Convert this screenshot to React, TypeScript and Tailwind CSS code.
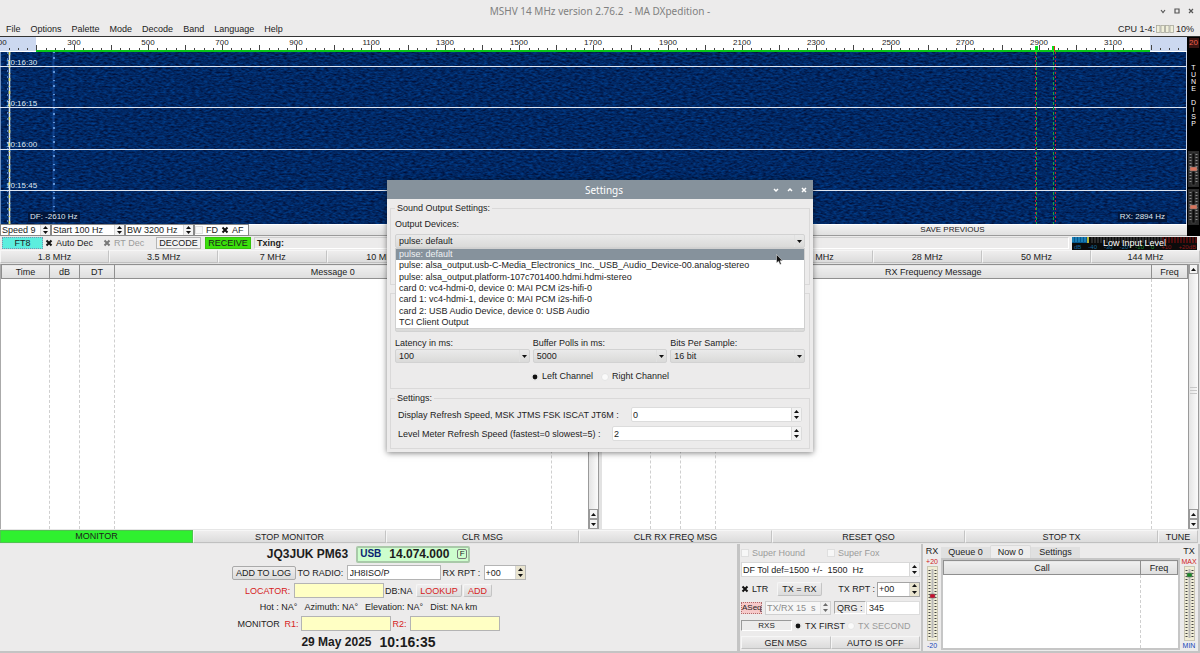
import type { ReactNode } from "react";
import clsx from "clsx";

const BANDS = ["1.8", "3.5", "7", "10", "14", "18", "21", "24", "28", "50", "144"];

const DEVICES = [
  "pulse: default",
  "pulse: alsa_output.usb-C-Media_Electronics_Inc._USB_Audio_Device-00.analog-stereo",
  "pulse: alsa_output.platform-107c701400.hdmi.hdmi-stereo",
  "card 0: vc4-hdmi-0, device 0: MAI PCM i2s-hifi-0",
  "card 1: vc4-hdmi-1, device 0: MAI PCM i2s-hifi-0",
  "card 2: USB Audio Device, device 0: USB Audio",
  "TCI Client Output",
];

// ruler geometry: the scale starts at 102 Hz and runs over 1187 units
const RULER_W = 1187;
const freqToX = (f: number) => Math.round((f - 102) * 0.3714);

const TIMES = [
  { label: "10:16:30", y: 14 },
  { label: "10:16:15", y: 55 },
  { label: "10:16:00", y: 97 },
  { label: "10:15:45", y: 138 },
];

function Arrow({ up = false }: { up?: boolean }) {
  return (
    <svg width="5" height="3" viewBox="0 0 5 3" className="shrink-0">
      <path d={up ? "M0 3 L2.5 0 L5 3Z" : "M0 0 L2.5 3 L5 0Z"} fill="#111" />
    </svg>
  );
}

function SpinButtons({ tone = "plain" }: { tone?: "plain" | "cream" | "dim" }) {
  return (
    <span
      className={clsx(
        "flex w-[10px] shrink-0 flex-col self-stretch border-l border-[#d8d8d8]",
        tone === "cream" && "bg-[#e9e4cf]",
        tone === "plain" && "bg-[#f3f3f3]",
        tone === "dim" && "bg-[#ededed] opacity-60",
      )}
    >
      <button type="button" aria-label="Increase" className="flex flex-1 items-center justify-center">
        <Arrow up />
      </button>
      <button type="button" aria-label="Decrease" className="flex flex-1 items-center justify-center">
        <Arrow />
      </button>
    </span>
  );
}

function Spin({
  label,
  value,
  className,
  tone = "plain",
}: {
  label: string;
  value: string;
  className?: string;
  tone?: "plain" | "cream" | "dim";
}) {
  return (
    <span className={clsx("flex items-stretch overflow-hidden border", className)}>
      <input aria-label={label} defaultValue={value} className="w-0 min-w-0 flex-1 bg-transparent pl-px outline-none" />
      <SpinButtons tone={tone} />
    </span>
  );
}

function PanelButton({ children, className }: { children?: ReactNode; className?: string }) {
  return (
    <button
      type="button"
      className={clsx(
        "flex items-center justify-center whitespace-nowrap border border-t-[#f6f6f6] border-r-[#c4c4c4] border-b-[#c0c0c0] border-l-[#f6f6f6] bg-linear-to-b from-[#efeeee] to-[#dcdcdc]",
        className,
      )}
    >
      {children}
    </button>
  );
}

function Check({ label, checked = false, dim = false }: { label: string; checked?: boolean; dim?: boolean }) {
  return (
    <label className={clsx("flex items-center whitespace-nowrap", dim && "text-[#9b9b9b]")}>
      <input type="checkbox" defaultChecked={checked} disabled={dim} className="peer sr-only" />
      <svg width="8" height="8" viewBox="0 0 8 8" className="mr-[3px] shrink-0">
        {checked ? (
          <path d="M1.5 1.5 L6.5 6.5 M6.5 1.5 L1.5 6.5" stroke={dim ? "#777" : "#111"} strokeWidth="2" />
        ) : (
          <rect x="0.5" y="0.5" width="7" height="7" fill="#f7f7f7" stroke="#dfdfdf" />
        )}
      </svg>
      {label}
    </label>
  );
}

function Radio({
  label,
  name,
  checked = false,
  dim = false,
}: {
  label: string;
  name: string;
  checked?: boolean;
  dim?: boolean;
}) {
  return (
    <label className={clsx("flex items-center whitespace-nowrap", dim && "text-[#9b9b9b]")}>
      <input type="radio" name={name} defaultChecked={checked} disabled={dim} className="peer sr-only" />
      <svg width="8" height="8" viewBox="0 0 8 8" className="mr-[3px] shrink-0">
        <circle cx="4" cy="4" r="3.5" fill={checked ? "#f0f0f0" : "#fafafa"} stroke="#e4e4e4" />
        {checked && <circle cx="4" cy="4" r="2.4" fill="#111" />}
      </svg>
      {label}
    </label>
  );
}

function Select({ id, options, className }: { id: string; options: string[]; className?: string }) {
  return (
    <span
      className={clsx(
        "relative flex h-[14px] items-center rounded-xs border border-[#d2d2d2] bg-linear-to-b from-[#eaeaea] to-[#dadad9]",
        className,
      )}
    >
      <select id={id} className="h-full w-full appearance-none bg-transparent pl-[3px] outline-none">
        {options.map((o) => (
          <option key={o}>{o}</option>
        ))}
      </select>
      <span className="pointer-events-none absolute inset-y-0 right-0 flex w-[10px] items-center justify-center border-l border-[#e0e0e0]">
        <Arrow />
      </span>
    </span>
  );
}

function TitleBar() {
  return (
    <header className="flex h-[22px] items-center bg-[#ecebeb] pr-0.5 pl-2 font-['Noto_Sans',sans-serif] text-[10px] text-[#808080]">
      <span className="w-8" />
      <h1 className="flex-1 whitespace-pre text-center">MSHV 14 MHz version 2.76.2  - MA DXpedition -</h1>
      <span className="flex w-[38px] items-center gap-2">
        {["M1 2 L3 4.5 L5 2", "M1 1 H5 V5 H1Z", "M1 1 L5 5 M5 1 L1 5"].map((d, i) => (
          <button key={d} type="button" aria-label={["Minimize", "Maximize", "Close"][i]}>
            <svg width="6" height="6" viewBox="0 0 6 6" fill="none" stroke="#555" strokeWidth="1.2">
              <path d={d} />
            </svg>
          </button>
        ))}
      </span>
    </header>
  );
}

function MenuBar() {
  return (
    <nav className="flex h-[14px] items-center bg-[#ecebeb] pr-1.5 pl-[6px]">
      <span className="flex gap-[10px]">
        {["File", "Options", "Palette", "Mode", "Decode", "Band", "Language", "Help"].map((m) => (
          <button key={m} type="button">
            {m}
          </button>
        ))}
      </span>
      <span className="ml-auto flex items-center">
        CPU 1-4:
        <svg width="19" height="8" viewBox="0 0 19 8" className="mx-px">
          {[0, 1, 2, 3].map((i) => (
            <rect key={i} x={i * 4.5 + 0.5} y="0.5" width="3.5" height="7" fill="#f0efda" stroke="#a9a99c" strokeWidth="0.8" />
          ))}
        </svg>
        10%
      </span>
    </nav>
  );
}

function Ruler() {
  const ticks = [];
  for (let f = 125; f < 3290; f += 25) ticks.push(f);
  const labels = [];
  for (let f = 100; f < 3200; f += 200) labels.push(f);
  return (
    <div className="relative h-[15px] overflow-hidden bg-white text-[8px] leading-[11px]">
      <svg className="h-full w-full" viewBox="0 0 1187 15" preserveAspectRatio="none" shapeRendering="crispEdges">
        <rect width="36" height="14" fill="#ccd8f0" />
        <rect x="1150" width="37" height="14" fill="#ccd8f0" />
        {ticks.map((f) => (
          <rect
            key={f}
            x={freqToX(f)}
            y={f % 100 === 0 ? 8 : 11}
            width="1"
            height={f % 100 === 0 ? 5 : 2}
            fill="#444"
          />
        ))}
        <rect x="36" y="13" width="1114" height="2" fill="#08c418" />
        <rect x="1035" y="9" width="3" height="6" fill="#06e01c" />
        <rect x="1052" y="9" width="2" height="6" fill="#06e01c" />
        <rect x="1054" y="9" width="1" height="6" fill="#e02020" />
      </svg>
      {labels.map((f) => (
        <span
          key={f}
          className="absolute top-0 w-8 -translate-x-1/2 text-center"
          style={{ left: `${((f === 100 ? 0 : freqToX(f)) / RULER_W) * 100}%` }}
        >
          {f}
        </span>
      ))}
    </div>
  );
}

function Waterfall() {
  return (
    <div className="relative h-[172px] overflow-hidden bg-[#01275f] text-[8px] leading-[10px] text-[#dfe6f2]">
      <svg className="h-full w-full" viewBox="0 0 1187 172" preserveAspectRatio="none">
        <defs>
          <filter id="noise" x="0" y="0" width="100%" height="100%" colorInterpolationFilters="sRGB">
            <feTurbulence type="fractalNoise" baseFrequency="0.24 0.55" numOctaves="2" seed="7" />
            <feColorMatrix values="0 0 0 0 0.002  0.28 0 0 0 0.015  0.5 0 0 0 0.14  0 0 0 0 1" />
          </filter>
        </defs>
        <rect width="1187" height="172" filter="url(#noise)" />
        <rect width="1" height="172" fill="#6f8fc0" />
        <path d="M9.5 0V172" stroke="#dfe9f0" strokeWidth="1.5" />
        <path d="M9.5 0V172" stroke="#e6e66a" strokeWidth="1.5" strokeDasharray="3 5 1 4" />
        <path d="M7.5 0V172" stroke="#4f7ecb" strokeDasharray="2 4" />
        <path d="M53.5 0V172" stroke="#1f55a8" strokeWidth="2" opacity="0.6" />
        <path d="M54 0V172" stroke="#5f93d6" strokeWidth="2" strokeDasharray="1 4 2 7" />
        {TIMES.map((t) => (
          <rect key={t.label} y={t.y} width="1186" height="1" fill="#dfe6f2" />
        ))}
        <path d="M1035.5 0V172 M1055.5 0V172" stroke="#c01f35" strokeDasharray="2 2" />
        <path d="M1036.5 0V172" stroke="#18a83a" strokeDasharray="3 2" />
        <path d="M1053.5 0V172" stroke="#18a83a" strokeDasharray="3 2" />
        <rect x="1186" width="1" height="172" fill="#c9d4e8" />
      </svg>
      <div className="absolute top-[6px] left-[6px] flex flex-col gap-[31px]">
        {TIMES.map((t) => (
          <span key={t.label}>{t.label}</span>
        ))}
      </div>
      <span className="absolute bottom-0.5 left-[28px] bg-[#02163b] px-0.5">DF: -2610 Hz</span>
      <span className="absolute right-[20px] bottom-0.5 bg-[#02163b] px-0.5">RX: 2894 Hz</span>
    </div>
  );
}

function DarkFader({ label, knob, height }: { label: string; knob: number; height: number }) {
  return (
    <div className="relative bg-[#2b2b2b]">
      <svg width="11" height={height} viewBox={`0 0 11 ${height}`} className="block">
        <path d={`M2.5 3V${height - 3} M8.5 3V${height - 3}`} stroke="#8a8a8a" strokeWidth="2" strokeDasharray="1 2" />
        <rect x="4" y="2" width="3" height={height - 4} fill="#0a0a0a" stroke="#555" strokeWidth="0.5" />
        <rect x="2" y={knob} width="7" height="4" fill="#d8745c" stroke="#777" strokeWidth="0.6" />
      </svg>
      <input type="range" aria-label={label} className="absolute inset-0 h-full w-full opacity-0" />
    </div>
  );
}

function TuneStrip() {
  return (
    <aside className="flex w-[13px] shrink-0 flex-col items-center bg-black text-white">
      <span className="mt-px w-[10px] bg-[#3a1512] text-center text-[8px] leading-[10px] text-[#f0604f]">20</span>
      <span className="mt-4 flex flex-col items-center text-[7px] leading-[7px]">
        {[..."TUNE"].map((c) => (
          <span key={c}>{c}</span>
        ))}
        <span className="mt-[7px] flex flex-col items-center">
          {[..."DISP"].map((c) => (
            <span key={c}>{c}</span>
          ))}
        </span>
      </span>
      <div className="mt-auto mb-[11px] flex flex-col gap-0.5">
        <DarkFader label="Tune gain" knob={16} height={36} />
        <DarkFader label="Display gain" knob={16} height={36} />
      </div>
    </aside>
  );
}

function WaterfallControls() {
  return (
    <div className="flex h-[12px] items-stretch bg-[#6e6e6e]">
      <Spin label="Speed" value="Speed 9" className="w-[51px] border-[#888] bg-white" />
      <Spin label="Start" value="Start 100 Hz" className="w-[74px] border-[#888] bg-white" />
      <Spin label="Bandwidth" value="BW 3200 Hz" className="w-[69px] border-[#888] bg-white" />
      <div className="flex w-[55px] items-center gap-[3px] border border-[#888] bg-white">
        <Check label="FD" />
        <Check label="AF" checked />
      </div>
      <button
        type="button"
        aria-label="Save current"
        className="flex-1 border-y border-t-white border-b-[#9a9a9a] bg-linear-to-b from-[#f2f2f2] to-[#e0e0e0]"
      />
      <button
        type="button"
        className="flex-1 border-y border-t-white border-b-[#9a9a9a] bg-linear-to-b from-[#f2f2f2] to-[#e0e0e0] text-[8px] leading-[10px]"
      >
        SAVE PREVIOUS
      </button>
    </div>
  );
}

function LevelMeter() {
  return (
    <div className="relative mr-[3px] flex h-[13px] w-[125px] items-center justify-center overflow-hidden bg-[#0b0b0b]">
      <svg width="125" height="13" viewBox="0 0 125 13" className="absolute inset-0">
        <rect width="15" height="6" fill="#07588f" />
        <path d="M0 2.5H15" stroke="#2a9bd0" strokeWidth="5" strokeDasharray="2 1" opacity="0.55" />
        <rect x="15" width="2" height="6" fill="#b4b43a" />
        <path d="M19 3H90" stroke="#2c2c2c" strokeWidth="6" strokeDasharray="2 1" />
        <path d="M90 3H125" stroke="#4a0c0c" strokeWidth="6" strokeDasharray="2 1" />
      </svg>
      <span aria-hidden="true" className="absolute inset-x-0 bottom-0 flex justify-between pr-px pl-0.5 text-[6px] leading-[6px]">
        <span className="text-[#12689f]">dB</span>
        <span className="text-[#12689f]">-40</span>
        <span className="text-[#12689f]">-30</span>
        <span className="text-[#12689f]">-20</span>
        <span className="text-[#188a30]">-10</span>
        <span className="text-[#188a30]">0</span>
        <span className="text-[#8c1717]">+10</span>
        <span className="text-[#8c1717]">+20dB</span>
      </span>
      <span className="relative text-white">Low Input Level</span>
    </div>
  );
}

function ModeBar() {
  return (
    <div className="flex h-[14px] items-center bg-[#ecebeb]">
      <button
        type="button"
        className="ml-0.5 h-[12px] w-[41px] border border-dotted border-[#7a8fb0] bg-[#5beede] text-center leading-[10px]"
      >
        FT8
      </button>
      <span className="ml-[2px] flex w-[111px] gap-[10px]">
        <Check label="Auto Dec" checked />
        <Check label="RT Dec" checked dim />
      </span>
      <button type="button" className="h-[12px] w-[45px] border border-[#b5b5b5] bg-[#f2f2f2] leading-[10px]">
        DECODE
      </button>
      <button type="button" className="ml-1 h-[12px] w-[46px] border border-[#35c40a] bg-[#3be00c] leading-[10px]">
        RECEIVE
      </button>
      <div className="mr-[3px] ml-[3px] h-[12px] flex-1 border border-t-[#d0d0d0] border-r-white border-b-white border-l-[#d0d0d0] pl-0.5 leading-[11px] font-bold">
        Txing:
      </div>
      <LevelMeter />
    </div>
  );
}

function BandBar() {
  return (
    <div className="flex h-[13px] bg-[#ecebeb]">
      {BANDS.map((b) => (
        <PanelButton key={b} className="flex-1">
          {b} MHz
        </PanelButton>
      ))}
    </div>
  );
}

function Scrollbar() {
  const box = "flex h-[10px] items-center justify-center border border-[#9a9a9a] bg-[#f4f4f4]";
  return (
    <div className="flex w-[11px] shrink-0 flex-col border-x border-[#9a9a9a] bg-linear-to-r from-[#e4e4e4] to-[#fbfbfb]">
      <button type="button" aria-label="Scroll to top" className={box}>
        <Arrow up />
      </button>
      <div className="flex flex-1 items-center justify-center">
        <svg width="7" height="9" viewBox="0 0 7 9">
          <path d="M0 0.5H7 M0 3.5H7 M0 6.5H7" stroke="#c8c8c8" />
        </svg>
      </div>
      <button type="button" aria-label="Scroll up" className={box}>
        <Arrow up />
      </button>
      <button type="button" aria-label="Scroll down" className={box}>
        <Arrow />
      </button>
    </div>
  );
}

function DataTable({ columns }: { columns: { title: string; width: string }[] }) {
  return (
    <table className="h-full w-full flex-1 table-fixed border-collapse bg-white">
      <thead>
        <tr className="h-[14px]">
          {columns.map((c) => (
            <th
              key={c.title}
              className={clsx(
                "border border-[#8f8f8f] bg-linear-to-b from-[#f0f0f0] to-[#dedede] p-0 text-center leading-[12px] font-normal",
                c.width,
              )}
            >
              {c.title}
            </th>
          ))}
        </tr>
      </thead>
      <tbody>
        <tr>
          {columns.map((c) => (
            <td key={c.title} className="border-r border-dashed border-[#cfcfcf] p-0 last:border-r-0" />
          ))}
        </tr>
      </tbody>
    </table>
  );
}

function messageColumns(title: string) {
  return [
    { title: "Time", width: "w-[48px]" },
    { title: "dB", width: "w-[30px]" },
    { title: "DT", width: "w-[35px]" },
    { title, width: "" },
    { title: "Freq", width: "w-[36px]" },
  ];
}

function Messages() {
  return (
    <main className="flex min-h-[240px] flex-1 gap-[3px] bg-[#e2e2e2] pt-px pr-px">
      <section className="flex flex-1 border-l border-[#aaa]">
        <DataTable columns={messageColumns("Message 0")} />
        <Scrollbar />
      </section>
      <section className="flex flex-1">
        <DataTable columns={messageColumns("RX Frequency Message")} />
        <Scrollbar />
      </section>
    </main>
  );
}

function ActionBar() {
  return (
    <div className="flex h-[15px] items-center bg-[#e6e6e6] pr-[2px]">
      <button type="button" className="h-[13px] flex-1 border border-[#4fc44f] bg-[#2ff02f] leading-[11px]">
        MONITOR
      </button>
      {["STOP MONITOR", "CLR MSG", "CLR RX FREQ MSG", "RESET QSO", "STOP TX"].map((t) => (
        <PanelButton key={t} className="h-[13px] flex-1">
          {t}
        </PanelButton>
      ))}
      <PanelButton className="h-[13px] w-[40px] border-l-[#b0b0b0]">TUNE</PanelButton>
    </div>
  );
}

const field = "border border-[#b4b4b4] px-0.5 outline-none";

function StationPanel() {
  return (
    <section className="flex flex-1 flex-col items-center gap-px border-r-2 border-[#c4c4c4] pt-px">
      <div className="flex h-[18px] items-center gap-2 text-[12px] font-bold">
        <span>JQ3JUK PM63</span>
        <span className="flex h-[17px] w-[114px] items-center rounded-xs border-2 border-[#a9c9a9] bg-[#cdfecd] pl-0.5">
          <span className="text-[10px] text-[#0a2472]">USB</span>
          <span className="ml-2">14.074.000</span>
          <button
            type="button"
            className="mr-px ml-auto h-[10px] w-[10px] rounded-xs border border-[#777] text-center text-[8px] leading-[8px] font-normal"
          >
            F
          </button>
        </span>
      </div>
      <div className="flex h-[17px] items-center pl-5">
        <PanelButton className="h-[14px] w-[64px] rounded-xs border-[#aaa]!">ADD TO LOG</PanelButton>
        <label htmlFor="radio" className="w-[51px] pl-0.5">
          TO RADIO:
        </label>
        <input id="radio" defaultValue="JH8ISO/P" className={clsx(field, "h-[15px] w-[94px] bg-white")} />
        <span className="w-[43px] pl-0.5">RX RPT :</span>
        <Spin label="RX report" value="+00" tone="cream" className="h-[15px] w-[42px] border-[#b4b4b4] bg-white" />
      </div>
      <div className="flex h-[17px] items-center">
        <label htmlFor="locator" className="w-[49px] text-[#d62222]">
          LOCATOR:
        </label>
        <input id="locator" className={clsx(field, "h-[15px] w-[90px] bg-[#ffffc4]")} />
        <span className="w-[32px] pl-px">DB:NA</span>
        <PanelButton className="h-[13px] w-[46px] rounded-xs text-[#d62222]">LOOKUP</PanelButton>
        <PanelButton className="ml-px h-[13px] w-[29px] rounded-xs text-[#d62222]">ADD</PanelButton>
      </div>
      <div className="flex h-[14px] items-center gap-[7px]">
        <span>Hot : NA°</span>
        <span>Azimuth: NA°</span>
        <span>Elevation: NA°</span>
        <span>Dist: NA km</span>
      </div>
      <div className="flex h-[17px] items-center">
        <span className="w-[47px]">MONITOR</span>
        <label htmlFor="r1" className="w-[16px] text-[#d62222]">
          R1:
        </label>
        <input id="r1" className={clsx(field, "h-[15px] w-[90px] bg-[#ffffc4]")} />
        <label htmlFor="r2" className="w-[19px] pl-0.5 text-[#d62222]">
          R2:
        </label>
        <input id="r2" className={clsx(field, "h-[15px] w-[90px] bg-[#ffffc4]")} />
      </div>
      <div className="flex h-[17px] items-center gap-2 font-bold">
        <span className="text-[12px]">29 May 2025</span>
        <span className="text-[14px]">10:16:35</span>
      </div>
    </section>
  );
}

function TxPanel() {
  return (
    <section className="flex w-[183px] shrink-0 flex-col gap-[2px] border-r border-l border-[#c4c4c4] px-px pt-px">
      <div className="flex h-[15px] items-center gap-[22px]">
        <Check label="Super Hound" dim />
        <Check label="Super Fox" dim />
      </div>
      <Spin label="DF tolerance" value="DF Tol def=1500 +/-  1500  Hz" className="h-[15px] border-[#d8d8d8] bg-white" />
      <div className="mt-px flex h-[18px] items-center">
        <span className="w-[36px]">
          <Check label="LTR" checked />
        </span>
        <PanelButton className="h-[14px] w-[45px] rounded-xs">TX = RX</PanelButton>
        <span className="ml-auto pr-0.5">TX RPT :</span>
        <Spin label="TX report" value="+00" tone="cream" className="h-[15px] w-[43px] border-[#a4a4a4] bg-white" />
      </div>
      <div className="flex h-[15px] items-center">
        <button type="button" className="h-[12px] w-[21px] border border-dotted border-[#b06a6a] bg-[#f6c9c9] text-[8px] leading-[10px]">
          ASeq
        </button>
        <Spin
          label="Period"
          value="TX/RX 15  s"
          tone="dim"
          className="ml-[3px] h-[14px] w-[66px] border-[#d0d0d0] bg-[#f6f6f6] text-[#8c8c8c]"
        />
        <label
          htmlFor="qrg"
          className="ml-[3px] h-[13px] w-[32px] border border-t-[#aaa] border-r-white border-b-white border-l-[#aaa] pl-0.5 leading-[12px]"
        >
          QRG :
        </label>
        <input id="qrg" defaultValue="345" className="h-[14px] w-0 flex-1 border border-[#dcdcdc] bg-white px-0.5 outline-none" />
      </div>
      <div className="mt-px flex h-[15px] items-center gap-[2px]">
        <span className="h-[11px] w-[51px] border border-t-[#999] border-r-white border-b-white border-l-[#999] text-center text-[8px] leading-[10px]">
          RXS
        </span>
        <Radio name="slot" label="TX FIRST" checked />
        <Radio name="slot" label="TX SECOND" dim />
      </div>
      <div className="flex h-[15px] items-center">
        <PanelButton className="h-[13px] flex-1">GEN MSG</PanelButton>
        <PanelButton className="h-[13px] flex-1 border-l-[#b0b0b0]">AUTO IS OFF</PanelButton>
      </div>
    </section>
  );
}

function Fader({
  title,
  top,
  bottom,
  knob,
  color,
}: {
  title: string;
  top: string;
  bottom: string;
  knob: number;
  color: string;
}) {
  return (
    <div className="flex w-[18px] shrink-0 flex-col items-center">
      <span className="h-[14px] leading-[14px]">{title}</span>
      <span className="text-[7px] leading-[8px] text-[#d01818]">{top}</span>
      <div className="relative">
        <svg width="11" height="75" viewBox="0 0 11 75" className="block">
          <rect x="0.5" y="0.5" width="10" height="74" fill="#f0edd6" stroke="#c9c6b2" />
          <path d="M2.5 4V72 M8.5 4V72" stroke="#444" strokeWidth="2" strokeDasharray="1 2" />
          <rect x="4.5" y="3" width="2" height="69" fill="#b8b8b8" />
          <rect x="3" y={knob} width="5" height="4" fill={color} stroke="#777" strokeWidth="0.6" />
        </svg>
        <input type="range" aria-label={`${title} level`} className="absolute inset-0 h-full w-full opacity-0" />
      </div>
      <span className="text-[7px] leading-[9px] text-[#1546b8]">{bottom}</span>
    </div>
  );
}

function QueuePanel() {
  return (
    <section className="flex w-[278px] shrink-0 border-r-2 border-l border-[#c4c4c4]">
      <Fader title="RX" top="+20" bottom="-20" knob={28} color="#c8102e" />
      <div className="flex flex-1 flex-col pb-px">
        <div role="tablist" className="flex h-[14px] items-end">
          <button role="tab" type="button" className="h-[11px] w-[49px] bg-[#e0e0e0] leading-[11px]">
            Queue 0
          </button>
          <button
            role="tab"
            type="button"
            aria-selected="true"
            className="h-[13px] w-[41px] rounded-t-xs border-x border-t border-[#dadada] bg-[#eeeded] leading-[11px]"
          >
            Now 0
          </button>
          <button role="tab" type="button" className="h-[11px] w-[49px] bg-[#e0e0e0] leading-[11px]">
            Settings
          </button>
        </div>
        <div className="flex-1 border-2 border-[#c6c6c6]">
          <DataTable
            columns={[
              { title: "Call", width: "" },
              { title: "Freq", width: "w-[37px]" },
            ]}
          />
        </div>
      </div>
      <Fader title="TX" top="MAX" bottom="MIN" knob={7} color="#1a8a26" />
    </section>
  );
}

function GroupBox({ title, className, children }: { title?: string; className?: string; children?: ReactNode }) {
  return (
    <fieldset className={clsx("min-w-0 border border-[#dad9d9]", className)}>
      {title && <legend className="ml-1 px-0.5 leading-[11px]">{title}</legend>}
      {children}
    </fieldset>
  );
}

function Cursor() {
  return (
    <svg width="7" height="11" viewBox="0 0 7 11" className="absolute top-[5px] right-[21px]">
      <path d="M0.5 0.5 V9 L2.5 7.2 L4 10.5 L5.3 9.9 L4 6.8 H6.6Z" fill="#111" stroke="#eee" strokeWidth="0.5" />
    </svg>
  );
}

function SettingsDialog() {
  return (
    <div className="pointer-events-none absolute inset-x-0 top-[180px] flex justify-center">
      <div
        role="dialog"
        aria-labelledby="dialog-title"
        className="pointer-events-auto w-[426px] bg-[#ecebeb] pb-[3px] shadow-[0_1px_6px_rgba(0,0,0,0.5)]"
      >
        <div className="flex h-[19px] items-center bg-[#86929c] pr-1 pl-12 font-['Noto_Sans',sans-serif] text-[10px] text-white">
          <h2 id="dialog-title" className="flex-1 text-center">
            Settings
          </h2>
          <span className="flex w-9 items-center gap-2">
            {["M1 2 L3 4 L5 2", "M1 4 L3 2 L5 4", "M1 1 L5 5 M5 1 L1 5"].map((d, i) => (
              <button key={d} type="button" aria-label={["Minimize", "Maximize", "Close"][i]}>
                <svg width="6" height="6" viewBox="0 0 6 6" fill="none" stroke="#fff" strokeWidth="1.5">
                  <path d={d} />
                </svg>
              </button>
            ))}
          </span>
        </div>

        <div className="px-[3px] pt-1">
          <GroupBox title="Sound Output Settings:" className="h-[82px]">
            <div className="flex flex-col px-1 pt-[5px]">
              <label htmlFor="output" className="leading-[11px]">
                Output Devices:
              </label>
              <div className="relative mt-1">
                <Select id="output" options={DEVICES} className="w-full" />
                {/* open device list */}
                <ul
                  role="listbox"
                  aria-label="Output Devices"
                  className="absolute inset-x-0 top-[14px] z-10 flex h-[81px] flex-col border border-[#d0d0d0] bg-white leading-[11px]"
                >
                  {DEVICES.map((d, i) => (
                    <li
                      key={d}
                      role="option"
                      aria-selected={i === 0}
                      className={clsx(
                        "flex flex-1 items-center whitespace-nowrap pl-[3px]",
                        i === 0 && "bg-[#86929c] text-[#eef1f3]",
                      )}
                    >
                      {d}
                    </li>
                  ))}
                  <Cursor />
                </ul>
              </div>
            </div>
          </GroupBox>

          <GroupBox className="mt-[8px] h-[96px] px-1 pt-[24px]">
            <Select id="channel-device" options={[""]} className="w-full" />
            <div className="mt-[6px] grid grid-cols-3 gap-[3px]">
              {[
                ["latency", "Latency in ms:", "100"],
                ["polls", "Buffer Polls in ms:", "5000"],
                ["bits", "Bits Per Sample:", "16 bit"],
              ].map(([id, label, value]) => (
                <div key={id}>
                  <label htmlFor={id} className="block leading-[11px]">
                    {label}
                  </label>
                  <Select id={id} options={[value]} className="w-full" />
                </div>
              ))}
            </div>
            <div className="mt-[8px] flex justify-center gap-2 leading-[11px]">
              <Radio name="channel" label="Left Channel" checked />
              <Radio name="channel" label="Right Channel" />
            </div>
          </GroupBox>

          <GroupBox title="Settings:" className="mt-[4px] pb-[7px]">
            <div className="flex flex-col gap-[4px] px-[7px] pt-[3px]">
              {[
                ["Display Refresh Speed, MSK JTMS FSK ISCAT JT6M :", "0", "w-[233px]"],
                ["Level Meter Refresh Speed (fastest=0 slowest=5) :", "2", "w-[214px]"],
              ].map(([label, value, width]) => (
                <div key={label} className="flex items-center">
                  <span className={clsx("shrink-0", width)}>{label}</span>
                  <Spin label={label} value={value} className="h-[15px] flex-1 rounded-xs border-[#dcdcdc] bg-white" />
                </div>
              ))}
            </div>
          </GroupBox>
        </div>
      </div>
    </div>
  );
}

export default function App() {
  return (
    <div className="relative flex min-h-screen flex-col bg-[#ecebeb] font-['Liberation_Sans',Arial,sans-serif] text-[9px] leading-[12px] text-[#1c1c1c]">
      <TitleBar />
      <MenuBar />
      <div className="flex border-t border-[#333]">
        <div className="min-w-0 flex-1">
          <Ruler />
          <Waterfall />
          <WaterfallControls />
        </div>
        <TuneStrip />
      </div>
      <ModeBar />
      <BandBar />
      <Messages />
      <ActionBar />
      <div className="flex h-[109px] border-b-2 border-[#c4c4c4]">
        <StationPanel />
        <TxPanel />
        <QueuePanel />
      </div>
      <SettingsDialog />
    </div>
  );
}
